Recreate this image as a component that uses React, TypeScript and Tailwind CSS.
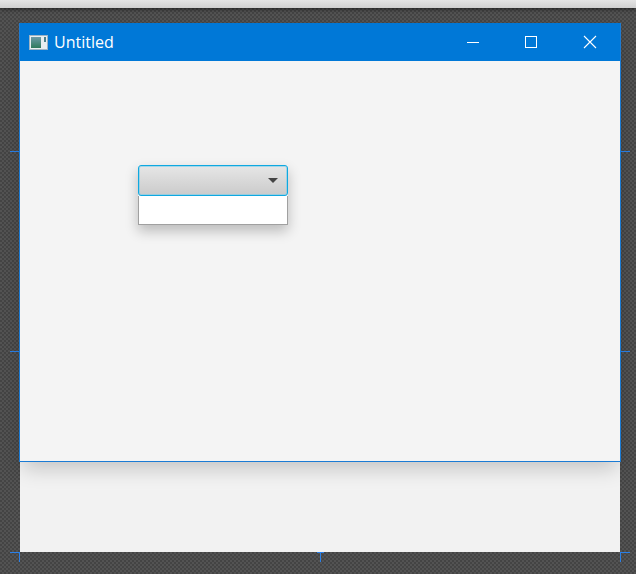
// Window preview on a checkered design canvas
function Tick(props: { className: string }) {
    return <div className={`absolute bg-[#2a80e8] ${props.className}`} />
}

export default function App() {
    return (
        <div className="relative w-[636px] h-[574px] overflow-hidden flex flex-col bg-[#4a4a4a] bg-[repeating-conic-gradient(#535353_0%_25%,#444444_0%_50%)] bg-[length:4px_4px] font-['Open_Sans',sans-serif]">
            <div className="h-2 shrink-0 bg-gradient-to-b from-[#e4e4e4] to-[#d0d0d0] shadow-[0_1px_4px_rgba(0,0,0,0.6)]" />

            <div className="mt-[15px] ml-[19px] w-[602px] h-[529px] flex flex-col shrink-0">
                <div className="relative z-10 h-[439px] shrink-0 flex flex-col border border-t-0 border-[#1b7bd4] shadow-[0_10px_20px_-4px_rgba(0,0,0,0.2)]">
                    <div className="h-[38px] shrink-0 bg-[#0078d7] flex items-center text-white">
                        <svg width="19" height="15" viewBox="0 0 19 15" className="ml-[9px]">
                            <rect x="0.5" y="0.5" width="18" height="14" fill="#e8eef0" stroke="#9fb4c4" />
                            <defs>
                                <linearGradient id="pic" x1="0" y1="0" x2="0" y2="1">
                                    <stop offset="0" stopColor="#6c9aa8" />
                                    <stop offset="1" stopColor="#2f7a5c" />
                                </linearGradient>
                            </defs>
                            <rect x="2" y="2" width="10" height="11" fill="url(#pic)" />
                            <rect x="15" y="2" width="2" height="5" fill="#4a7f8c" />
                        </svg>
                        <span className="ml-[6px] text-[16px] leading-none">Untitled</span>
                        <div className="ml-auto mr-[7px] flex items-center h-full">
                            <div className="w-[46px] h-full flex items-center justify-center">
                                <div className="w-3 h-px bg-white" />
                            </div>
                            <div className="ml-[12px] w-[46px] h-full flex items-center justify-center">
                                <div className="w-3 h-3 border border-white" />
                            </div>
                            <div className="ml-[13px] w-[46px] h-full flex items-center justify-center">
                                <svg width="14" height="14" viewBox="0 0 14 14">
                                    <path d="M1 1L13 13M13 1L1 13" stroke="#fff" strokeWidth="1.1" fill="none" />
                                </svg>
                            </div>
                        </div>
                    </div>

                    <div className="flex-1 bg-[#f4f4f4] pl-[118px] pt-[104px]">
                        <div className="w-[150px] shadow-[0_6px_12px_rgba(0,0,0,0.24)]">
                            <div className="h-[31px] rounded-[3px] border border-[#0fa8e0] shadow-[inset_0_0_0_1px_rgba(120,205,235,0.6)] bg-gradient-to-b from-[#e6e6e6] to-[#cbcbcb] flex items-center justify-end pr-[9px]">
                                <div className="w-0 h-0 border-x-[5px] border-x-transparent border-t-[5px] border-t-[#444444]" />
                            </div>
                            <div className="h-[29px] bg-white border-x border-b border-[#a0a0a0]" />
                        </div>
                    </div>
                </div>

                <div className="flex-1 mx-px bg-[#f2f2f2]" />
            </div>

            <Tick className="left-[10px] top-[151px] w-[9px] h-px" />
            <Tick className="left-[10px] top-[351px] w-[9px] h-px" />
            <Tick className="left-[621px] top-[151px] w-[9px] h-px" />
            <Tick className="left-[621px] top-[351px] w-[9px] h-px" />
            <Tick className="left-[10px] top-[552px] w-[10px] h-px" />
            <Tick className="left-[19px] top-[552px] w-px h-[10px]" />
            <Tick className="left-[620px] top-[552px] w-[10px] h-px" />
            <Tick className="left-[620px] top-[552px] w-px h-[10px]" />
            <Tick className="left-[317px] top-[552px] w-[7px] h-px" />
            <Tick className="left-[320px] top-[552px] w-px h-[10px]" />
        </div>
    )
}
